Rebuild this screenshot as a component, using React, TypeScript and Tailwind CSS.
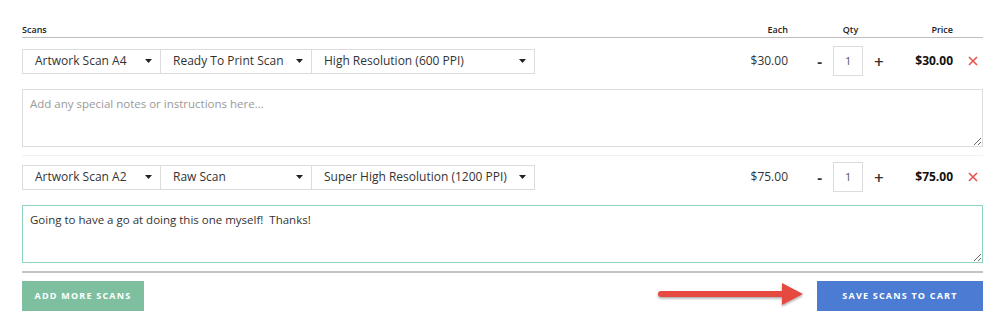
import React from "react";

type ScanRow = {
  size: string;
  type: string;
  resolution: string;
  each: string;
  qty: number;
  price: string;
  notes: string;
  focused?: boolean;
};

const rows: ScanRow[] = [
  {
    size: "Artwork Scan A4",
    type: "Ready To Print Scan",
    resolution: "High Resolution (600 PPI)",
    each: "$30.00",
    qty: 1,
    price: "$30.00",
    notes: "",
  },
  {
    size: "Artwork Scan A2",
    type: "Raw Scan",
    resolution: "Super High Resolution (1200 PPI)",
    each: "$75.00",
    qty: 1,
    price: "$75.00",
    notes: "Going to have a go at doing this one myself!  Thanks!",
    focused: true,
  },
];

function Caret() {
  return (
    <svg width="7" height="4" viewBox="0 0 7 4" className="shrink-0">
      <path d="M0 0h7L3.5 4z" fill="#222" />
    </svg>
  );
}

function FakeSelect({ value, width }: { value: string; width: string }) {
  return (
    <div
      className={`${width} h-[25px] flex items-center justify-between pl-[12px] pr-[8px] border border-[#dcdcdc] -ml-px first:ml-0 bg-white text-[12px] text-[#333]`}
    >
      <span className="whitespace-nowrap">{value}</span>
      <Caret />
    </div>
  );
}

function Row({ row }: { row: ScanRow }) {
  return (
    <div className="flex items-center h-[30px]">
      <div className="flex">
        <FakeSelect value={row.size} width="w-[139px]" />
        <FakeSelect value={row.type} width="w-[152px]" />
        <FakeSelect value={row.resolution} width="w-[224px]" />
      </div>
      <div className="flex-1 text-right text-[12px] text-[#333]">{row.each}</div>
      <div className="w-[123px] flex items-center justify-center gap-[11px] pl-[2px]">
        <span className="text-[15px] font-bold text-[#333] leading-none">-</span>
        <div className="w-[30px] h-[30px] border border-[#dcdcdc] flex items-center justify-center text-[11px] text-[#555]">
          {row.qty}
        </div>
        <span className="text-[17px] font-semibold text-[#333] leading-none">+</span>
      </div>
      <div className="w-[42px] text-right text-[12px] font-bold text-[#111] whitespace-nowrap">{row.price}</div>
      <div className="w-[30px] flex justify-end pr-[5px]">
        <svg width="10" height="10" viewBox="0 0 10 10">
          <path d="M1 1l8 8M9 1l-8 8" stroke="#e5544b" strokeWidth="1.6" />
        </svg>
      </div>
    </div>
  );
}

export default function App() {
  return (
    <div
      className="w-[1000px] h-[325px] bg-white pt-[22px] pl-[22px] pr-[17px]"
      style={{ fontFamily: '"Open Sans", "Liberation Sans", sans-serif' }}
    >
      <div className="flex items-end h-[16px] pb-[1px] border-b border-[#bdbdbd] text-[9px] font-semibold text-[#222]">
        <div className="flex-1">Scans</div>
        <div className="w-[60px] text-right">Each</div>
        <div className="w-[123px] text-center pl-[2px]">Qty</div>
        <div className="w-[42px] text-right">Price</div>
        <div className="w-[30px]" />
      </div>

      {rows.map((row, i) => (
        <div key={i} className={i > 0 ? "border-t border-[#f1f1f1] mt-[8px] pt-[6px]" : "mt-[8px]"}>
          <Row row={row} />
          <textarea
            defaultValue={row.notes}
            placeholder="Add any special notes or instructions here..."
            className={`block w-full h-[58px] mt-[13px] px-[7px] py-[5px] text-[11.5px] text-[#333] placeholder:text-[#999] border outline-none resize-y ${
              row.focused ? "border-[#8fd4bf]" : "border-[#dcdcdc]"
            }`}
          />
        </div>
      ))}

      <div className="relative mt-[8px] pt-[8px] border-t-2 border-[#c4c4c4] flex justify-between">
        <button className="w-[122px] h-[30px] bg-[#7dbf9f] text-white text-[9px] font-bold tracking-[1.2px]">
          ADD MORE SCANS
        </button>
        <svg
          width="160"
          height="34"
          viewBox="0 0 160 34"
          className="absolute left-[628px] top-[5px]"
        >
          <defs>
            <filter id="sh" x="-10%" y="-40%" width="120%" height="180%">
              <feDropShadow dx="0" dy="1.5" stdDeviation="1.2" floodColor="#000" floodOpacity="0.35" />
            </filter>
          </defs>
          <g filter="url(#sh)" fill="#e64a40">
            <rect x="8" y="13" width="130" height="6" rx="3" />
            <path d="M132 5L153 16L132 27z" />
          </g>
        </svg>
        <button className="w-[166px] h-[30px] bg-[#4c7bd4] text-white text-[9px] font-bold tracking-[1.2px]">
          SAVE SCANS TO CART
        </button>
      </div>
    </div>
  );
}
